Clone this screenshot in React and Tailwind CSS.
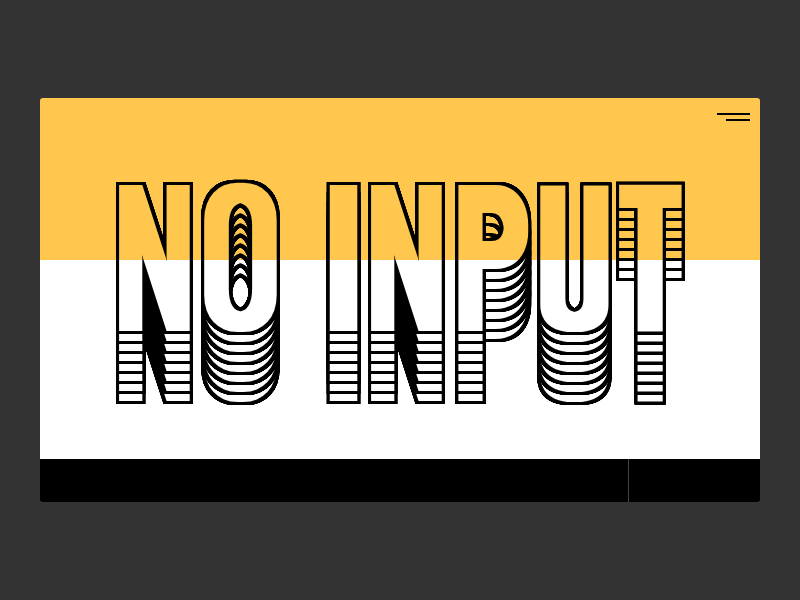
import React from 'react';

// x = centre of glyph, sx = horizontal squeeze, fat = extra stem weight
// stretch = px the straight part of the glyph gets pulled out, split = height above baseline where it is cut
const letters = [
  { ch: 'N', x: 154.5, sx: 0.57, size: 197 },
  { ch: 'O', x: 240.5, sx: 1.02, size: 105, stretch: 66, split: 37, fat: 1 },
  { ch: 'I', x: 343.5, sx: 0.7, size: 197 },
  { ch: 'N', x: 406.5, sx: 0.57, size: 197 },
  { ch: 'P', x: 492.5, sx: 0.71, size: 166, stretch: 22, split: 17 },
  { ch: 'U', x: 574.5, sx: 1.06, size: 105, stretch: 64, split: 42, fat: 1 },
  { ch: 'T', x: 650.5, sx: 0.68, size: 130, stretch: 48, split: 26, fat: 3 },
];

const layers = [7, 6, 5, 4, 3, 2, 1, 0];
const stretches = [22, 48, 64, 66];
const fats = [1, 3];

const Glyph = ({ letter, base }) => {
  const { ch, x, sx, size, stretch, split, fat } = letter;
  const textProps = {
    textAnchor: 'middle',
    fontSize: size,
    fontWeight: 900,
    fontFamily: 'Roboto, sans-serif',
    transform: `scale(${sx} 1)`,
  };

  if (!stretch) {
    return (
      <g transform={`translate(${x} ${base})`}>
        <text {...textProps}>{ch}</text>
      </g>
    );
  }

  return (
    <g filter={fat ? `url(#fat-${fat})` : undefined}>
      <g transform={`translate(${x} ${base - split - stretch})`}>
        <g clipPath="url(#upper)">
          <text {...textProps} y={split}>{ch}</text>
        </g>
      </g>
      <g transform={`translate(${x} ${base - split - stretch / 2})`}>
        <g filter={`url(#stretch-${stretch})`}>
          <g clipPath="url(#band)">
            <text {...textProps} y={split}>{ch}</text>
          </g>
        </g>
      </g>
      <g transform={`translate(${x} ${base - split})`}>
        <g clipPath="url(#lower)">
          <text {...textProps} y={split}>{ch}</text>
        </g>
      </g>
    </g>
  );
};

const Wordmark = () => (
  <svg viewBox="40 98 720 361" className="absolute inset-0 w-full h-full">
    <defs>
      <clipPath id="upper"><rect x="-200" y="-300" width="400" height="300" /></clipPath>
      <clipPath id="band"><rect x="-200" y="-1" width="400" height="2" /></clipPath>
      <clipPath id="lower"><rect x="-200" y="0" width="400" height="300" /></clipPath>
      {stretches.map((s) => (
        <filter key={s} id={`stretch-${s}`} filterUnits="userSpaceOnUse" x="-150" y="-60" width="300" height="120">
          <feMorphology operator="dilate" radius={`0 ${s / 2 - 1}`} />
        </filter>
      ))}
      {fats.map((f) => (
        <filter key={f} id={`fat-${f}`} filterUnits="userSpaceOnUse" x="40" y="98" width="720" height="361">
          <feMorphology operator="dilate" radius={`${f} 0`} />
        </filter>
      ))}
      <filter id="outline" filterUnits="userSpaceOnUse" primitiveUnits="userSpaceOnUse" x="40" y="98" width="720" height="361" colorInterpolationFilters="sRGB">
        <feMorphology in="SourceAlpha" operator="dilate" radius="2 3" result="inner" />
        <feMorphology in="inner" operator="dilate" radius="3 3" result="grown" />
        <feGaussianBlur in="grown" stdDeviation="0.6" result="soft" />
        <feComponentTransfer in="soft" result="outer">
          <feFuncA type="linear" slope="2.4" />
        </feComponentTransfer>
        <feFlood floodColor="#000" result="ink" />
        <feComposite in="ink" in2="outer" operator="in" result="ring" />
        <feFlood floodColor="#ffc74d" x="40" y="98" width="720" height="162" result="top" />
        <feFlood floodColor="#fff" x="40" y="260" width="720" height="199" result="bottom" />
        <feMerge result="paper">
          <feMergeNode in="top" />
          <feMergeNode in="bottom" />
        </feMerge>
        <feComposite in="paper" in2="inner" operator="in" result="face" />
        <feMerge>
          <feMergeNode in="ring" />
          <feMergeNode in="face" />
        </feMerge>
      </filter>
    </defs>
    {layers.map((layer) => (
      <g key={layer} filter="url(#outline)">
        {letters.map((l, i) => (
          <Glyph key={i} letter={l} base={328 + layer * 10} />
        ))}
      </g>
    ))}
  </svg>
);

const App = () => {
  return (
    <div className="w-full h-screen bg-[#333333] flex items-center justify-center">
      <div className="w-[720px] h-[404px] flex flex-col rounded-[3px] overflow-hidden">
        <div className="relative h-[361px] flex flex-col">
          <div className="h-[162px] bg-[#ffc74d] flex flex-col items-end gap-1 pt-[15px] pr-[10px]">
            <div className="w-[33px] h-[2px] bg-black"></div>
            <div className="w-[24px] h-[2px] bg-black"></div>
          </div>
          <div className="flex-1 bg-white"></div>
          <Wordmark />
        </div>
        <div className="flex-1 bg-black flex justify-end">
          <div className="w-[132px] border-l border-[#444444]"></div>
        </div>
      </div>
    </div>
  );
};

export default App;
